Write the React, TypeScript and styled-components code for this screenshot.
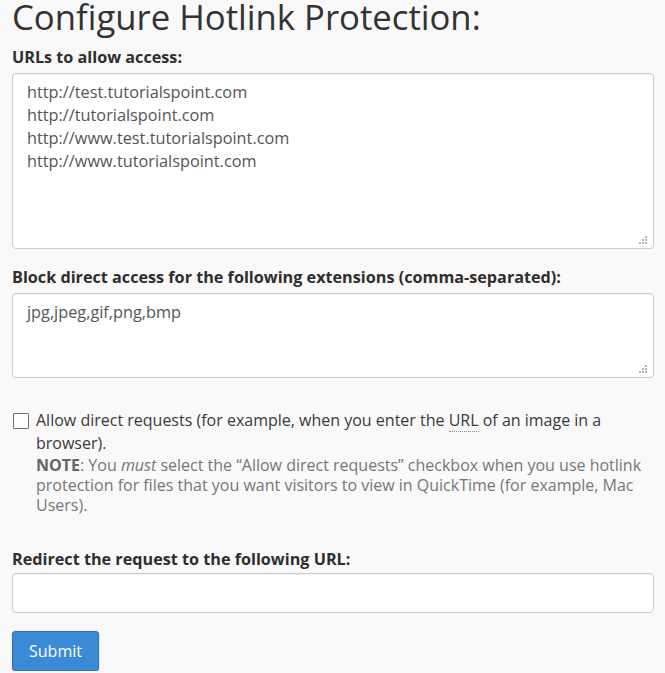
import React from "react";
import styled, { createGlobalStyle } from "styled-components";

const Global = createGlobalStyle`
  html, body { margin: 0; padding: 0; background: #f9f9f9; }
  body { font-family: "Open Sans", "Liberation Sans", sans-serif; color: #333; }
  * { box-sizing: border-box; }
`;

const Page = styled.form`
  padding: 0 11px 0 12px;
  display: flex;
  flex-direction: column;
`;

const Title = styled.h1`
  margin: 0 0 12px 0;
  font-size: 34.7px;
  font-weight: 400;
  line-height: 34px;
  color: #333;
`;

const Label = styled.label<{ $mb?: number }>`
  display: block;
  font-size: 16.2px;
  font-weight: 700;
  line-height: 22px;
  margin: 0 0 ${(p) => p.$mb ?? 5}px 0;
  color: #2e2e2e;
`;

const Group = styled.div<{ $gap: number }>`
  margin-bottom: ${(p) => p.$gap}px;
`;

const FieldWrap = styled.div`
  position: relative;
`;

const TextArea = styled.textarea<{ $h: number }>`
  display: block;
  width: 100%;
  height: ${(p) => p.$h}px;
  padding: 7px 14px;
  font-family: "Open Sans", "Liberation Sans", sans-serif;
  font-size: 16.3px;
  line-height: 23px;
  color: #555;
  background: #fff;
  border: 1px solid #ccc;
  border-radius: 4px;
  box-shadow: inset 0 1px 1px rgba(0, 0, 0, 0.06);
  resize: none;
  outline: none;
`;

const Grip = styled.svg`
  position: absolute;
  right: 6px;
  bottom: 4px;
  width: 9px;
  height: 9px;
  pointer-events: none;
`;

const Input = styled.input`
  display: block;
  width: 100%;
  height: 40px;
  padding: 6px 14px;
  font-family: "Open Sans", "Liberation Sans", sans-serif;
  font-size: 16px;
  color: #555;
  background: #fff;
  border: 1px solid #ccc;
  border-radius: 4px;
  box-shadow: inset 0 1px 1px rgba(0, 0, 0, 0.06);
  outline: none;
`;

const CheckRow = styled.div`
  display: flex;
  align-items: flex-start;
  gap: 7px;
`;

const Box = styled.input`
  appearance: none;
  flex: none;
  width: 16px;
  height: 16px;
  margin: 4px 0 0 1px;
  background: #fff;
  border: 1px solid #6f6f6f;
  border-radius: 1px;
`;

const CheckText = styled.label`
  display: block;
  font-size: 16px;
  line-height: 23px;
  color: #3a3a3a;
`;

const Abbr = styled.abbr`
  text-decoration: none;
  border-bottom: 1px dotted #888;
  cursor: help;
`;

const Note = styled.p`
  margin: 0;
  font-size: 16px;
  line-height: 20px;
  color: #777;
  strong { color: #666; }
`;

const Submit = styled.button`
  align-self: flex-start;
  height: 40px;
  padding: 0 16px;
  font-family: "Open Sans", "Liberation Sans", sans-serif;
  font-size: 16px;
  color: #fff;
  background: #3b8ad6;
  border: 1px solid #2f73b5;
  border-radius: 3px;
  box-shadow: 0 1px 2px rgba(0, 0, 0, 0.2);
`;

function ResizeGrip() {
  const dots = [
    [6, 0],
    [3, 3],
    [6, 3],
    [0, 6],
    [3, 6],
    [6, 6],
  ];
  return (
    <Grip viewBox="0 0 9 9" aria-hidden="true">
      {dots.map(([x, y]) => (
        <rect key={`${x}-${y}`} x={x} y={y} width="2" height="2" fill="#b5b5b5" />
      ))}
    </Grip>
  );
}

export default function App() {
  const urls = [
    "http://test.tutorialspoint.com",
    "http://tutorialspoint.com",
    "http://www.test.tutorialspoint.com",
    "http://www.tutorialspoint.com",
  ].join("\n");
  return (
    <>
      <Global />
      <Page onSubmit={(e) => e.preventDefault()}>
        <Title>Configure Hotlink Protection:</Title>
        <Group $gap={17}>
          <Label htmlFor="urls">URLs to allow access:</Label>
          <FieldWrap>
            <TextArea id="urls" $h={176} defaultValue={urls} />
            <ResizeGrip />
          </FieldWrap>
        </Group>
        <Group $gap={31}>
          <Label htmlFor="ext">Block direct access for the following extensions (comma-separated):</Label>
          <FieldWrap>
            <TextArea id="ext" $h={85} defaultValue="jpg,jpeg,gif,png,bmp" />
            <ResizeGrip />
          </FieldWrap>
        </Group>
        <Group $gap={33}>
          <CheckRow>
            <Box type="checkbox" id="direct" />
            <div>
              <CheckText htmlFor="direct">
                Allow direct requests (for example, when you enter the <Abbr title="Uniform Resource Locator">URL</Abbr> of an image in a browser).
              </CheckText>
              <Note>
                <strong>NOTE</strong>: You <em>must</em> select the “Allow direct requests” checkbox when you use hotlink protection for files that you want visitors to view in QuickTime (for example, Mac Users).
              </Note>
            </div>
          </CheckRow>
        </Group>
        <Group $gap={18}>
          <Label htmlFor="redirect" $mb={3}>Redirect the request to the following URL:</Label>
          <Input id="redirect" type="text" />
        </Group>
        <Submit type="submit">Submit</Submit>
      </Page>
    </>
  );
}
